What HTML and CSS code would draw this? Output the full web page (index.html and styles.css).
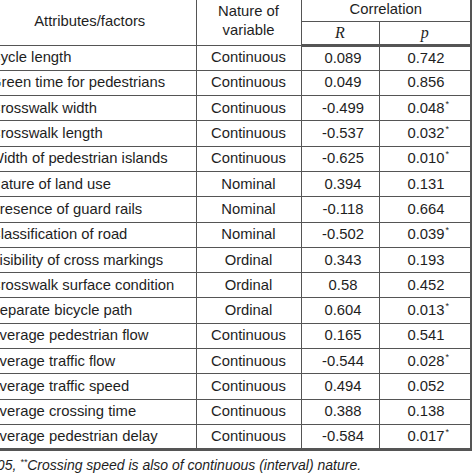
FILE: index.html
```html
<!DOCTYPE html>
<html>
<head>
<meta charset="utf-8">
<link rel="stylesheet" href="styles.css">
</head>
<body>
<div class="page">
<table class="corr">
  <colgroup>
    <col class="c1"><col class="c2"><col class="c3"><col class="c4">
  </colgroup>
  <thead>
    <tr class="h1">
      <th rowspan="2" class="attr">Attributes/factors</th>
      <th rowspan="2" class="nat">Nature of<br>variable</th>
      <th colspan="2" class="cor">Correlation</th>
    </tr>
    <tr class="h2">
      <th class="sym">R</th>
      <th class="sym">p</th>
    </tr>
  </thead>
  <tbody>
    <tr><td class="name">Cycle length</td><td class="kind">Continuous</td><td class="r">0.089</td><td class="p">0.742</td></tr>
    <tr><td class="name">Green time for pedestrians</td><td class="kind">Continuous</td><td class="r">0.049</td><td class="p">0.856</td></tr>
    <tr><td class="name">Crosswalk width</td><td class="kind">Continuous</td><td class="r">-0.499</td><td class="p">0.048<sup>*</sup></td></tr>
    <tr><td class="name">Crosswalk length</td><td class="kind">Continuous</td><td class="r">-0.537</td><td class="p">0.032<sup>*</sup></td></tr>
    <tr><td class="name">Width of pedestrian islands</td><td class="kind">Continuous</td><td class="r">-0.625</td><td class="p">0.010<sup>*</sup></td></tr>
    <tr><td class="name">Nature of land use</td><td class="kind">Nominal</td><td class="r">0.394</td><td class="p">0.131</td></tr>
    <tr><td class="name">Presence of guard rails</td><td class="kind">Nominal</td><td class="r">-0.118</td><td class="p">0.664</td></tr>
    <tr><td class="name">Classification of road</td><td class="kind">Nominal</td><td class="r">-0.502</td><td class="p">0.039<sup>*</sup></td></tr>
    <tr><td class="name">Visibility of cross markings</td><td class="kind">Ordinal</td><td class="r">0.343</td><td class="p">0.193</td></tr>
    <tr><td class="name">Crosswalk surface condition</td><td class="kind">Ordinal</td><td class="r">0.58</td><td class="p">0.452</td></tr>
    <tr><td class="name">Separate bicycle path</td><td class="kind">Ordinal</td><td class="r">0.604</td><td class="p">0.013<sup>*</sup></td></tr>
    <tr><td class="name">Average pedestrian flow</td><td class="kind">Continuous</td><td class="r">0.165</td><td class="p">0.541</td></tr>
    <tr><td class="name">Average traffic flow</td><td class="kind">Continuous</td><td class="r">-0.544</td><td class="p">0.028<sup>*</sup></td></tr>
    <tr><td class="name">Average traffic speed</td><td class="kind">Continuous</td><td class="r">0.494</td><td class="p">0.052</td></tr>
    <tr><td class="name">Average crossing time</td><td class="kind">Continuous</td><td class="r">0.388</td><td class="p">0.138</td></tr>
    <tr class="last"><td class="name">Average pedestrian delay</td><td class="kind">Continuous</td><td class="r">-0.584</td><td class="p">0.017<sup>*</sup></td></tr>
  </tbody>
</table>
<p class="note"><i>*p &lt; 0.05, <sup>**</sup>Crossing speed is also of continuous (interval) nature.</i></p>
</div>
</body>
</html>
```
FILE: styles.css
```css
html, body {
  margin: 0;
  padding: 0;
  background: #ffffff;
  overflow: hidden;
}
.page {
  width: 474px;
  height: 474px;
  overflow: hidden;
  font-family: "Liberation Sans", Arial, sans-serif;
  font-size: 14.8px;
  color: #1e1e1e;
}
.corr {
  border-collapse: collapse;
  table-layout: fixed;
  width: 487px;
  margin-left: -16px;
  margin-top: -2px;
}
.c1 { width: 212px; }
.c2 { width: 105px; }
.c3 { width: 78px; }
.c4 { width: 92px; }
.corr th, .corr td {
  border: 1px solid #555;
  padding: 0;
  font-weight: normal;
  line-height: 17px;
}
.corr th {
  text-align: center;
}
.corr .h1 { height: 23px; }
.corr .h2 { height: 24px; }
.corr .h2 th { border-bottom: 3px solid #555; }
.corr .attr { border-left: none; border-top: none; }
.corr .nat { border-top: none; line-height: 19px; }
.corr .cor { border-top: none; }
.corr td:last-child, .corr th:last-child { border-right: 2px solid #555; }
.corr .sym {
  font-family: "Liberation Serif", "Times New Roman", serif;
  font-style: italic;
  font-size: 16px;
}
.corr tbody tr { height: 25.3px; }
.corr .name {
  text-align: left;
  padding-left: 6px;
  border-left: none;
}
.corr .kind { text-align: center; }
.corr .r { text-align: center; padding-left: 6px; }
.corr .p { text-align: left; padding-left: 28px; }
.corr .p sup {
  font-size: 9px;
  line-height: 0;
  vertical-align: 6px;
  margin-left: 1px;
}
.corr .last td { border-bottom: 3px solid #555; }
.note {
  margin: 6px 0 0 -44px;
  font-size: 14px;
  white-space: nowrap;
  color: #1e1e1e;
}
.note sup {
  font-size: 9px;
  line-height: 0;
  vertical-align: 5px;
}
```
